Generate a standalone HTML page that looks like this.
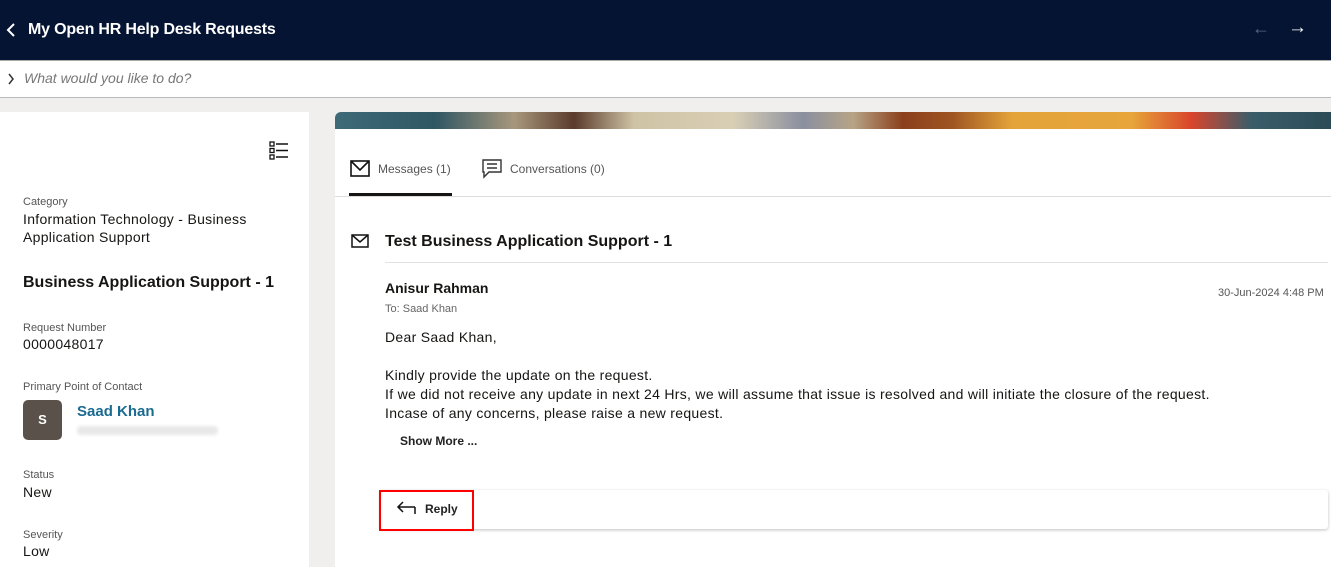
<!DOCTYPE html>
<html><head><meta charset="utf-8"><style>
*{margin:0;padding:0;box-sizing:border-box}
body{width:1331px;height:567px;overflow:hidden;background:#f1efed;font-family:"Liberation Sans",sans-serif;color:#161513;position:relative}
.a{position:absolute;white-space:nowrap}
.hdr{position:absolute;left:0;top:0;width:1331px;height:60px;background:#051433}
.srch{position:absolute;left:0;top:60px;width:1331px;height:38px;background:#fff;border-top:1px solid #aaa;border-bottom:1px solid #bbb}
.left{position:absolute;left:0;top:112px;width:309px;height:455px;background:#fff}
.main{position:absolute;left:335px;top:112px;width:996px;height:455px;background:#fff;border-radius:6px 0 0 0;overflow:hidden}
.banner{height:17px;background:linear-gradient(90deg,#3e6a78 0%,#2f5663 10%,#a8977c 18%,#5a3b2c 24%,#cfc3a5 30%,#d9cfb5 40%,#8a8fa0 47%,#b7a486 52%,#8b3f1c 57%,#a05522 62%,#e4a43a 68%,#e7a53a 80%,#d8452b 86%,#3a5d6a 92%,#2c4b57 100%)}
.lbl{font-size:11px;color:#555}
.val{font-size:14px;color:#161513;letter-spacing:0.3px}
</style></head><body>
<div class="hdr"></div>
<svg class="a" style="left:6px;top:23px" width="10" height="14"><path d="M8 1 L2 7 L8 13" stroke="#fff" stroke-width="2" fill="none"/></svg>
<div class="a" style="left:28px;top:21px;color:#fff;font-weight:bold;font-size:16px;letter-spacing:-0.2px">My Open HR Help Desk Requests</div>
<div class="a" style="left:1252px;top:18px;color:#5b6680;font-size:18px">←</div>
<div class="a" style="left:1288px;top:17px;color:#fff;font-size:19px;font-weight:bold">→</div>
<div class="srch"></div>
<svg class="a" style="left:7px;top:73px" width="8" height="12"><path d="M2 1 L6 6 L2 11" stroke="#333" stroke-width="1.5" fill="none"/></svg>
<div class="a" style="left:24px;top:70px;font-size:14px;font-style:italic;color:#777">What would you like to do?</div>

<div class="left"></div>
<svg class="a" style="left:269px;top:141px" width="20" height="19"><rect x="1" y="1" width="4" height="4" fill="none" stroke="#111" stroke-width="1.3"/><rect x="1" y="7.5" width="4" height="4" fill="none" stroke="#111" stroke-width="1.3"/><rect x="1" y="14" width="4" height="4" fill="none" stroke="#111" stroke-width="1.3"/><path d="M7 3h12M7 9.5h12M7 16h12" stroke="#111" stroke-width="1.6"/></svg>
<div class="a lbl" style="left:23px;top:196px">Category</div>
<div class="a val" style="left:23px;top:210px;line-height:18px">Information Technology - Business<br>Application Support</div>
<div class="a" style="left:23px;top:274px;font-size:16px;font-weight:bold">Business Application Support - 1</div>
<div class="a lbl" style="left:23px;top:322px">Request Number</div>
<div class="a val" style="left:23px;top:336px">0000048017</div>
<div class="a lbl" style="left:23px;top:381px">Primary Point of Contact</div>
<div class="a" style="left:23px;top:400px;width:39px;height:40px;border-radius:5px;background:#5a524a;color:#fff;font-weight:bold;font-size:13px;text-align:center;line-height:40px">S</div>
<div class="a" style="left:77px;top:403px;font-size:15px;font-weight:bold;color:#1b6b91">Saad Khan</div>
<div class="a" style="left:77px;top:426px;width:141px;height:9px;background:#e8e8e8;border-radius:4px;filter:blur(1.5px)"></div>
<div class="a lbl" style="left:23px;top:469px">Status</div>
<div class="a val" style="left:23px;top:484px">New</div>
<div class="a lbl" style="left:23px;top:529px">Severity</div>
<div class="a val" style="left:23px;top:543px">Low</div>

<div class="main"><div class="banner"></div></div>
<svg class="a" style="left:350px;top:160px" width="20" height="17"><rect x="1" y="1" width="18" height="15" fill="none" stroke="#111" stroke-width="1.6"/><path d="M1 1 L10 10 L19 1" fill="none" stroke="#111" stroke-width="1.6"/></svg>
<div class="a" style="left:378px;top:162px;font-size:12px;color:#555">Messages (1)</div>
<div class="a" style="left:349px;top:193px;width:103px;height:3px;background:#161513"></div>
<svg class="a" style="left:482px;top:159px" width="20" height="20"><path d="M1 1h18v12H7l-5 5V13H1z" fill="none" stroke="#333" stroke-width="1.4"/><path d="M5 5h10M5 9h10" stroke="#333" stroke-width="1.4"/></svg>
<div class="a" style="left:510px;top:162px;font-size:12px;color:#555">Conversations (0)</div>
<div class="a" style="left:335px;top:196px;width:996px;height:1px;background:#ddd"></div>

<svg class="a" style="left:351px;top:234px" width="18" height="14"><rect x="1" y="1" width="16" height="12" fill="none" stroke="#111" stroke-width="1.5"/><path d="M1 1 L9 8 L17 1" fill="none" stroke="#111" stroke-width="1.5"/></svg>
<div class="a" style="left:385px;top:233px;font-size:16px;font-weight:bold">Test Business Application Support - 1</div>
<div class="a" style="left:385px;top:262px;width:943px;height:1px;background:#e2e2e2"></div>
<div class="a" style="left:385px;top:280px;font-size:14px;font-weight:bold">Anisur Rahman</div>
<div class="a" style="left:1218px;top:287px;font-size:11px;color:#555">30-Jun-2024 4:48 PM</div>
<div class="a" style="left:385px;top:303px;font-size:11px;color:#666">To: Saad Khan</div>
<div class="a" style="left:385px;top:328px;font-size:14px;line-height:19px;letter-spacing:0.3px">Dear Saad Khan,<br><br>Kindly provide the update on the request.<br>If we did not receive any update in next 24 Hrs, we will assume that issue is resolved and will initiate the closure of the request.<br>Incase of any concerns, please raise a new request.</div>
<div class="a" style="left:400px;top:434px;font-size:12px;font-weight:bold;color:#222">Show More ...</div>

<div class="a" style="left:380px;top:490px;width:948px;height:39px;background:#fff;border-radius:3px;box-shadow:0 1px 3px rgba(0,0,0,.25)"></div>
<div class="a" style="left:379px;top:490px;width:95px;height:41px;border:2px solid #f00"></div>
<svg class="a" style="left:396px;top:501px" width="20" height="14"><path d="M19 6H3M7 1L2 6l5 5M19 6v7" fill="none" stroke="#111" stroke-width="1.5"/></svg>
<div class="a" style="left:425px;top:502px;font-size:12px;font-weight:bold;color:#222">Reply</div>
</body></html>
